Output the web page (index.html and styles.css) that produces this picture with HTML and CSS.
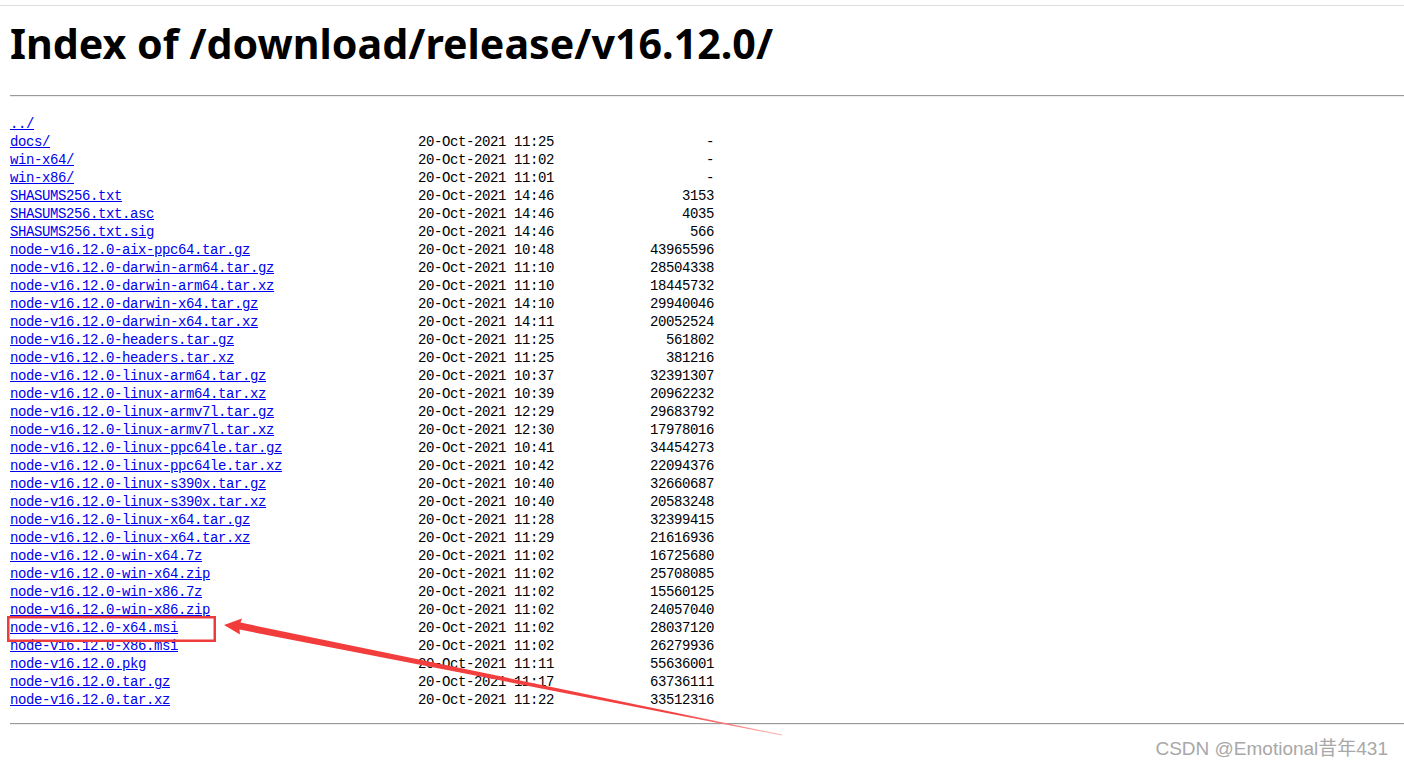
FILE: index.html
```html
<!DOCTYPE html>
<html>
<head>
<meta charset="utf-8">
<title>Index of /download/release/v16.12.0/</title>
<link rel="stylesheet" href="styles.css">
</head>
<body>
<div class="topline"></div>
<div class="page">
  <h1 class="title">Index of /download/release/v16.12.0/</h1>
  <hr class="rule">
  <div class="listing">
    <div class="row"><a class="name" href="#">../</a></div>
    <div class="row"><span class="name"><a href="#">docs/</a></span><span class="date">20-Oct-2021 11:25</span><span class="size">-</span></div>
    <div class="row"><span class="name"><a href="#">win-x64/</a></span><span class="date">20-Oct-2021 11:02</span><span class="size">-</span></div>
    <div class="row"><span class="name"><a href="#">win-x86/</a></span><span class="date">20-Oct-2021 11:01</span><span class="size">-</span></div>
    <div class="row"><span class="name"><a href="#">SHASUMS256.txt</a></span><span class="date">20-Oct-2021 14:46</span><span class="size">3153</span></div>
    <div class="row"><span class="name"><a href="#">SHASUMS256.txt.asc</a></span><span class="date">20-Oct-2021 14:46</span><span class="size">4035</span></div>
    <div class="row"><span class="name"><a href="#">SHASUMS256.txt.sig</a></span><span class="date">20-Oct-2021 14:46</span><span class="size">566</span></div>
    <div class="row"><span class="name"><a href="#">node-v16.12.0-aix-ppc64.tar.gz</a></span><span class="date">20-Oct-2021 10:48</span><span class="size">43965596</span></div>
    <div class="row"><span class="name"><a href="#">node-v16.12.0-darwin-arm64.tar.gz</a></span><span class="date">20-Oct-2021 11:10</span><span class="size">28504338</span></div>
    <div class="row"><span class="name"><a href="#">node-v16.12.0-darwin-arm64.tar.xz</a></span><span class="date">20-Oct-2021 11:10</span><span class="size">18445732</span></div>
    <div class="row"><span class="name"><a href="#">node-v16.12.0-darwin-x64.tar.gz</a></span><span class="date">20-Oct-2021 14:10</span><span class="size">29940046</span></div>
    <div class="row"><span class="name"><a href="#">node-v16.12.0-darwin-x64.tar.xz</a></span><span class="date">20-Oct-2021 14:11</span><span class="size">20052524</span></div>
    <div class="row"><span class="name"><a href="#">node-v16.12.0-headers.tar.gz</a></span><span class="date">20-Oct-2021 11:25</span><span class="size">561802</span></div>
    <div class="row"><span class="name"><a href="#">node-v16.12.0-headers.tar.xz</a></span><span class="date">20-Oct-2021 11:25</span><span class="size">381216</span></div>
    <div class="row"><span class="name"><a href="#">node-v16.12.0-linux-arm64.tar.gz</a></span><span class="date">20-Oct-2021 10:37</span><span class="size">32391307</span></div>
    <div class="row"><span class="name"><a href="#">node-v16.12.0-linux-arm64.tar.xz</a></span><span class="date">20-Oct-2021 10:39</span><span class="size">20962232</span></div>
    <div class="row"><span class="name"><a href="#">node-v16.12.0-linux-armv7l.tar.gz</a></span><span class="date">20-Oct-2021 12:29</span><span class="size">29683792</span></div>
    <div class="row"><span class="name"><a href="#">node-v16.12.0-linux-armv7l.tar.xz</a></span><span class="date">20-Oct-2021 12:30</span><span class="size">17978016</span></div>
    <div class="row"><span class="name"><a href="#">node-v16.12.0-linux-ppc64le.tar.gz</a></span><span class="date">20-Oct-2021 10:41</span><span class="size">34454273</span></div>
    <div class="row"><span class="name"><a href="#">node-v16.12.0-linux-ppc64le.tar.xz</a></span><span class="date">20-Oct-2021 10:42</span><span class="size">22094376</span></div>
    <div class="row"><span class="name"><a href="#">node-v16.12.0-linux-s390x.tar.gz</a></span><span class="date">20-Oct-2021 10:40</span><span class="size">32660687</span></div>
    <div class="row"><span class="name"><a href="#">node-v16.12.0-linux-s390x.tar.xz</a></span><span class="date">20-Oct-2021 10:40</span><span class="size">20583248</span></div>
    <div class="row"><span class="name"><a href="#">node-v16.12.0-linux-x64.tar.gz</a></span><span class="date">20-Oct-2021 11:28</span><span class="size">32399415</span></div>
    <div class="row"><span class="name"><a href="#">node-v16.12.0-linux-x64.tar.xz</a></span><span class="date">20-Oct-2021 11:29</span><span class="size">21616936</span></div>
    <div class="row"><span class="name"><a href="#">node-v16.12.0-win-x64.7z</a></span><span class="date">20-Oct-2021 11:02</span><span class="size">16725680</span></div>
    <div class="row"><span class="name"><a href="#">node-v16.12.0-win-x64.zip</a></span><span class="date">20-Oct-2021 11:02</span><span class="size">25708085</span></div>
    <div class="row"><span class="name"><a href="#">node-v16.12.0-win-x86.7z</a></span><span class="date">20-Oct-2021 11:02</span><span class="size">15560125</span></div>
    <div class="row"><span class="name"><a href="#">node-v16.12.0-win-x86.zip</a></span><span class="date">20-Oct-2021 11:02</span><span class="size">24057040</span></div>
    <div class="row"><span class="name"><a href="#">node-v16.12.0-x64.msi</a></span><span class="date">20-Oct-2021 11:02</span><span class="size">28037120</span></div>
    <div class="row"><span class="name"><a href="#">node-v16.12.0-x86.msi</a></span><span class="date">20-Oct-2021 11:02</span><span class="size">26279936</span></div>
    <div class="row"><span class="name"><a href="#">node-v16.12.0.pkg</a></span><span class="date">20-Oct-2021 11:11</span><span class="size">55636001</span></div>
    <div class="row"><span class="name"><a href="#">node-v16.12.0.tar.gz</a></span><span class="date">20-Oct-2021 11:17</span><span class="size">63736111</span></div>
    <div class="row"><span class="name"><a href="#">node-v16.12.0.tar.xz</a></span><span class="date">20-Oct-2021 11:22</span><span class="size">33512316</span></div>
  </div>
  <hr class="rule rule-bottom">
</div>
<svg class="annotation" width="1404" height="768" viewBox="0 0 1404 768" xmlns="http://www.w3.org/2000/svg">
  <defs>
    <linearGradient id="fade" x1="224" y1="625" x2="782" y2="735" gradientUnits="userSpaceOnUse">
      <stop offset="0" stop-color="#f23c3c"/>
      <stop offset="0.8" stop-color="#f44040"/>
      <stop offset="1" stop-color="#ffb0b0"/>
    </linearGradient>
  </defs>
  <rect x="8.25" y="617.25" width="206.5" height="23.5" fill="none" stroke="#ee3b3b" stroke-width="2.5"/>
  <polygon fill="url(#fade)" points="224,625 242,618.5 240.5,622.6 782,734.6 782,735.4 239.5,629.6 240,634.5"/>
</svg>
<div class="watermark">CSDN @Emotional昔年431</div>
</body>
</html>
```

FILE: styles.css
```css
html, body {
  margin: 0;
  padding: 0;
  background: #ffffff;
}

body {
  width: 1404px;
  height: 768px;
  overflow: hidden;
  position: relative;
}

.topline {
  margin-top: 5px;
  height: 1px;
  background: #dddddd;
}

.page {
  padding-left: 10px;
}

.title {
  margin: 0;
  padding-top: 8px;
  height: 74px;
  font-family: "Noto Sans", "Open Sans", sans-serif;
  font-weight: 700;
  font-size: 41.2px;
  line-height: 58px;
  color: #000000;
  box-sizing: border-box;
}

.rule {
  margin: 15px 0 0 0;
  height: 0;
  border: 0;
  border-top: 1px solid #9a9a9a;
  border-bottom: 1px solid #eeeeee;
}

.listing {
  margin-top: 18px;
  font-family: "Liberation Mono", monospace;
  font-size: 14px;
  letter-spacing: -0.4px;
  line-height: 18px;
  color: #000000;
}

.row {
  display: flex;
  height: 18px;
  white-space: pre;
}

.name {
  width: 408px;
  flex: none;
}

.row a {
  color: #0000ee;
  text-decoration: underline;
}

.date {
  width: 136px;
  flex: none;
}

.size {
  width: 160px;
  flex: none;
  text-align: right;
}

.rule-bottom {
  margin-top: 14px;
}

.annotation {
  position: absolute;
  left: 0;
  top: 0;
  pointer-events: none;
}

.watermark {
  position: absolute;
  right: 16px;
  top: 738px;
  font-family: "Liberation Sans", "Noto Sans CJK SC", sans-serif;
  font-size: 19px;
  line-height: 22px;
  color: #a8a8a8;
}
```
